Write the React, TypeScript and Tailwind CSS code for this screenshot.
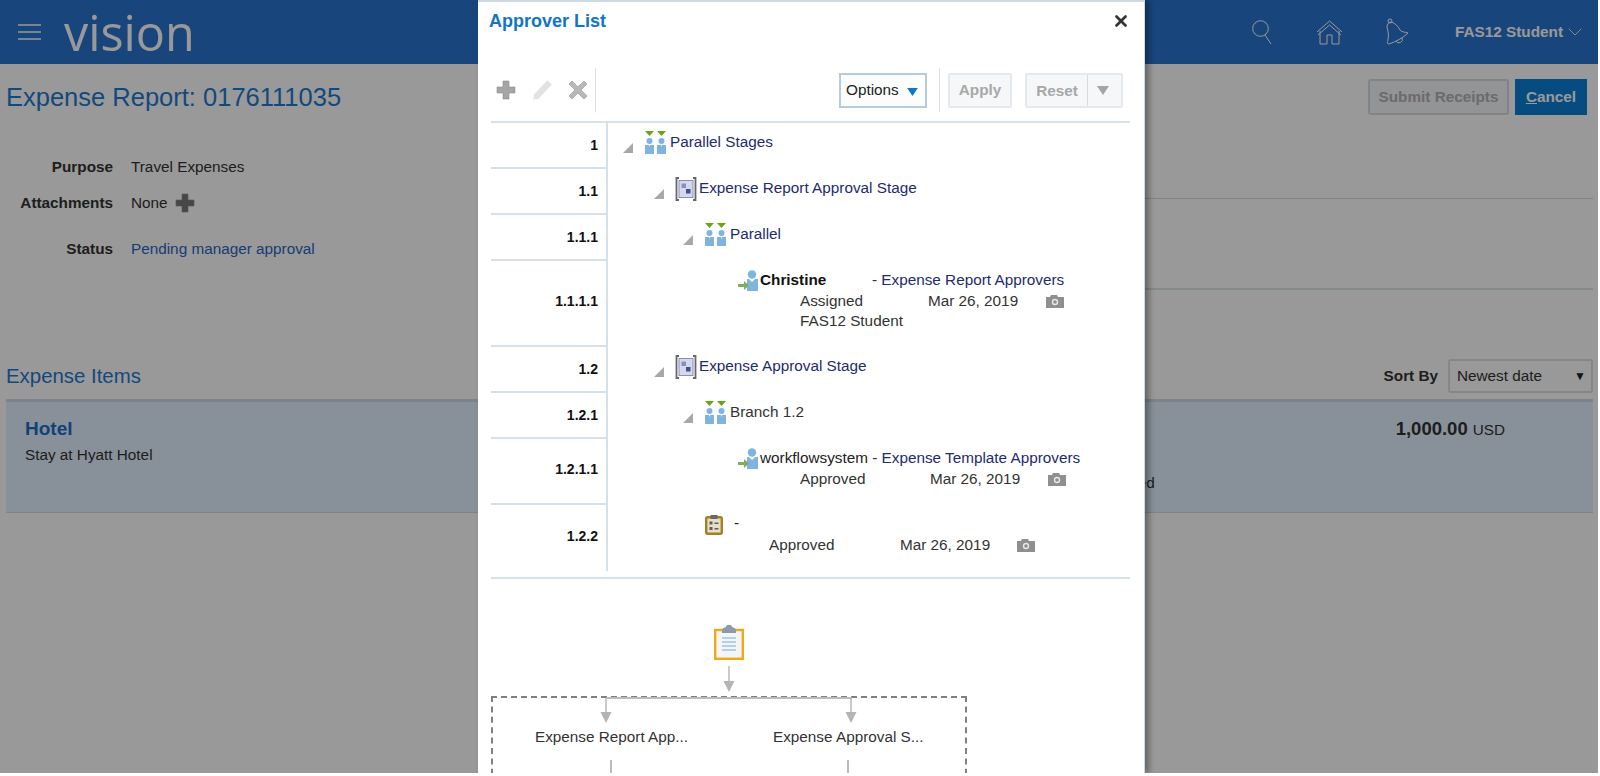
import React from "react";
import { ChevronDown, X } from "lucide-react";

const font = "font-['Liberation_Sans',Arial,sans-serif]";

const ParallelIcon = () => (
  <svg width="24" height="24" viewBox="0 0 24 24" className="shrink-0">
    <path d="M1 0h9l-4.500 5zM13 0h9l-4.500 5z" fill="#6aa516" />
    <circle cx="5.500" cy="10" r="3" fill="#7fb3e0" />
    <circle cx="17.500" cy="10" r="3" fill="#7fb3e0" />
    <path d="M1 14h4l.5 2 .5-2h4v9H1zM13 14h4l.5 2 .5-2h4v9h-9z" fill="#7fb3e0" />
  </svg>
);

const StageIcon = () => (
  <svg width="22" height="24" viewBox="0 0 22 24" className="shrink-0">
    <path d="M4 1H1.500v22H4M18 1h2.500v22H18" fill="none" stroke="#666" strokeWidth="1.800" />
    <rect x="4" y="3.500" width="14" height="17" fill="#d5d8ec" stroke="#8a8fb8" />
    <rect x="6.500" y="6.500" width="4.500" height="4.500" fill="#8a8fb8" />
    <rect x="11" y="12" width="4.500" height="4.500" fill="#4a4e88" />
  </svg>
);

const UserIcon = () => (
  <svg width="22" height="22" viewBox="0 0 22 22" className="shrink-0">
    <circle cx="15" cy="4.500" r="4.200" fill="#7fb3e0" />
    <path d="M10 9h2l3 3 3-3h3v12H10z" fill="#7fb3e0" />
    <path d="M1 14h6v-3l5 4.500L7 20v-3H1z" fill="#7fae62" />
  </svg>
);

const CameraIcon = () => (
  <svg width="18" height="13" viewBox="0 0 18 13" className="shrink-0">
    <path d="M0 2h4l1-2h6l1 2h6v11H0z" fill="#8f8f8f" />
    <circle cx="9" cy="7" r="3.200" fill="#e8e8e8" />
    <circle cx="9" cy="7" r="1.800" fill="#8f8f8f" />
  </svg>
);

const Caret = () => (
  <svg width="12" height="12" viewBox="0 0 12 12" className="shrink-0">
    <path d="M11 1v10H1z" fill="#a8a8a8" />
  </svg>
);

const PlusIcon = ({ size = 20, fill = "#a5a5a5" }: { size?: number; fill?: string }) => (
  <svg width={size} height={size} viewBox="0 0 20 20">
    <path d="M7 1h6v6h6v6h-6v6H7v-6H1V7h6z" fill={fill} stroke="#8d8d8d" strokeWidth="0.600" />
  </svg>
);

const DownArrow = ({ h = 24 }: { h?: number }) => (
  <svg width="12" height={h} viewBox={`0 0 12 ${h}`} className="block">
    <path d={`M6 0v${h - 9}`} stroke="#b8b8b8" strokeWidth="1.500" />
    <path d={`M0.500 ${h - 11}h11L6 ${h}z`} fill="#b4b4b4" />
  </svg>
);

const ChecklistIcon = () => (
  <svg width="18" height="20" viewBox="0 0 18 20" className="shrink-0">
    <rect x="1.200" y="2.200" width="15.600" height="16.600" rx="1.500" fill="#e4dfca" stroke="#a67f1f" strokeWidth="2.400" />
    <rect x="5.500" y="0" width="7" height="4" fill="#6b6b63" />
    <path d="M4.500 6.500h3v3h-3zM4.500 12h3v3h-3z" fill="#5f5f58" />
    <path d="M9.500 7.500h4v1.500h-4zM9.500 13h4v1.500h-4z" fill="#5f5f58" />
  </svg>
);

const rows = [
  { num: "1", h: "h-[46px]" },
  { num: "1.1", h: "h-[46px]" },
  { num: "1.1.1", h: "h-[46px]" },
  { num: "1.1.1.1", h: "h-[86px] pb-[3px]" },
  { num: "1.2", h: "h-[46px]" },
  { num: "1.2.1", h: "h-[46px]" },
  { num: "1.2.1.1", h: "h-[66px] pb-[3px]" },
  { num: "1.2.2", h: "h-[66px] pb-[3px]" },
];

const Approver = ({ children, status, date, extra, statusW }: { children: React.ReactNode; status: string; date: string; extra?: string; statusW: string }) => (
  <div className="pl-[129px] pt-[9px]">
    <div className="flex items-start gap-[1px] h-[20px]">
      <UserIcon />
      <div className="leading-[20px] whitespace-nowrap">{children}</div>
    </div>
    <div className="pl-[63px] pt-[1px] leading-[20px] text-[#333]">
      <div className="flex items-center">
        <span className={statusW}>{status}</span>
        <span className="w-[118px]">{date}</span>
        <CameraIcon />
      </div>
      {extra && <div>{extra}</div>}
    </div>
  </div>
);

const TreeRow = ({ pad, icon, label, color = "text-[#1d2b6f]" }: { pad: string; icon: React.ReactNode; label: string; color?: string }) => (
  <div className={`flex items-start pt-[8px] ${pad}`}>
    <div className="pt-[11px] w-[22px]">
      <Caret />
    </div>
    {icon}
    <span className={`ml-[2px] mt-[1px] leading-[20px] whitespace-nowrap ${color}`}>{label}</span>
  </div>
);

export default function App() {
  return (
    <div className={`w-[1600px] h-[776px] bg-white overflow-hidden text-[15.300px] ${font}`}>
      <div className="relative w-[1598px] h-[773px] bg-white overflow-hidden">
        {/* page behind the dialog */}
        <header className="h-[64px] bg-[#2b73d0] flex items-center pl-[18px] pr-[11px] text-white">
          <svg width="23" height="16" viewBox="0 0 23 16" fill="none" stroke="white" strokeWidth="1.500">
            <path d="M0 1h23M0 8h23M0 15h23" />
          </svg>
          <span className="ml-[23px] font-['Open_Sans',sans-serif] font-normal text-[48.500px] leading-[56px] -mt-[1px]">vision</span>
          <div className="ml-auto flex items-center">
            <svg width="20" height="24" viewBox="0 0 20 24" fill="none" stroke="white" strokeWidth="1">
              <circle cx="8.500" cy="8.500" r="7.800" />
              <path d="M13 15l6 9" />
            </svg>
            <svg width="27" height="25" viewBox="0 0 27 25" className="ml-[44px]" fill="none" stroke="white" strokeWidth="1">
              <path d="M1 12 13.500 1 26 12M4 11v13h7v-9h5v9h7V11M2 15 13.500 5 25 15" />
            </svg>
            <svg width="24" height="28" viewBox="0 0 24 28" className="ml-[43px]" fill="none" stroke="white" strokeWidth="1">
              <circle cx="4" cy="3" r="2" />
              <path d="M5 4C9 5 12 8 14 12c1 2 5 2 8 3-5 5-13 9-19 11-3 0-1-3-1-5 1-4 0-8-1-12 0-3 2-5 4-5z" />
              <path d="M10 23a3 3 0 0 0 6-3" />
            </svg>
            <span className="ml-[45px] font-bold">FAS12 Student</span>
            <ChevronDown size={24} strokeWidth={0.800} />
          </div>
        </header>

        <div className="pl-[6px] pr-[5px]">
          <div className="flex items-start h-[82px] pt-[15px]">
            <h1 className="text-[25.500px] leading-[36px] text-[#1f7ad0] whitespace-nowrap">Expense Report: 0176111035</h1>
            <div className="ml-auto flex gap-[6px] pr-[6px]">
              <button className="w-[141px] h-[36px] border-2 border-[#d8dde0] rounded-[3px] bg-[#f5f7f8] font-bold text-[#b2b2b2]">Submit Receipts</button>
              <button className="w-[72px] h-[36px] bg-[#0a7fd6] font-bold text-white">
                <span className="underline">C</span>ancel
              </button>
            </div>
          </div>

          <div className="flex justify-between h-[213px]">
            <div className="grid grid-cols-[107px_1fr] gap-x-[18px] content-start text-[#333] leading-[20px]">
              <div className="text-right font-bold pt-[11px]">Purpose</div>
              <div className="pt-[11px]">Travel Expenses</div>
              <div className="text-right font-bold pt-[16px]">Attachments</div>
              <div className="pt-[16px] flex items-center gap-[7px]">
                None
                <PlusIcon size={20} fill="#777" />
              </div>
              <div className="text-right font-bold pt-[26px]">Status</div>
              <div className="pt-[26px] text-[#2a66c0]">Pending manager approval</div>
            </div>
            <div className="w-[600px] h-[92px] mt-[52px] border-t border-b-2 border-t-[#d4dcdc] border-b-[#dde4ea]" />
          </div>

          <div className="flex items-center h-[34px]">
            <h2 className="text-[20.400px] text-[#1f7ad0]">Expense Items</h2>
            <span className="ml-auto font-bold text-[#333]">Sort By</span>
            <div className="ml-[10px] w-[145px] h-[34px] border-2 border-[#dde0e3] rounded-[3px] flex items-center justify-between pl-[7px] pr-[5px] text-[#333]">
              Newest date
              <span className="text-[12px] text-[#222]">▼</span>
            </div>
          </div>

          <div className="mt-[6px] h-[114px] border-t-[3px] border-b border-[#d0dbe5] bg-[#e3f2ff] flex pl-[19px]">
            <div>
              <div className="font-bold text-[19px] text-[#1f6dc8] leading-[24px] mt-[15px]">Hotel</div>
              <div className="text-[#333] leading-[20px] mt-[4px]">Stay at Hyatt Hotel</div>
            </div>
            <div className="ml-auto mt-[71px] leading-[20px] text-[#333]">Approved</div>
            <div className="ml-[241px] pr-[88px] pt-[15px] leading-[24px] text-[#333]">
              <span className="font-bold text-[18.500px]">1,000.00</span>
              <span className="ml-[5px]">USD</span>
            </div>
          </div>
        </div>

        <div className="absolute inset-0 bg-black/40" />

        {/* dialog */}
        <div className="absolute left-[478px] top-0 bottom-0 w-[667px] bg-white border-t-2 border-r border-[#cdd9e4] shadow-[4px_0_6px_rgba(0,0,0,0.35)] text-[#222] overflow-hidden">
          <div className="flex items-center justify-between pl-[11px] pr-[14px] h-[38px]">
            <span className="font-bold text-[18px] text-[#0f75c9]">Approver List</span>
            <X size={18} strokeWidth={3.500} className="text-[#333]" />
          </div>

          <div className="flex items-center h-[44px] mt-[28px] ml-[18px] mr-[21px]">
            <PlusIcon size={20} />
            <svg width="24" height="24" viewBox="0 0 22 22" className="ml-[15px]">
              <path d="M15 2l4 4L7 19l-5 1 1-5z" fill="#e2e2e2" />
            </svg>
            <svg width="20" height="20" viewBox="0 0 20 20" className="ml-[13px]">
              <path d="M4 1l6 6 6-6 3 3-6 6 6 6-3 3-6-6-6 6-3-3 6-6-6-6z" fill="#b8b8b8" stroke="#8f8f8f" strokeWidth="0.600" />
            </svg>
            <div className="ml-[7px] w-px h-[44px] bg-[#d6e0e8]" />
            <button className="ml-auto w-[88px] h-[35px] border-2 border-[#b9cad8] bg-[#fbfcfc] flex items-center justify-between pl-[5px] pr-[7px] text-[#222]">
              Options
              <svg width="11" height="8" viewBox="0 0 12 9" className="mt-[3px]"><path d="M0 0h12L6 9z" fill="#0f75c9" /></svg>
            </button>
            <div className="ml-[12px] w-px h-[44px] bg-[#d6e0e8]" />
            <button className="ml-[8px] w-[64px] h-[35px] border-2 border-[#e4e9ed] rounded-[2px] bg-[#f5f7f8] font-bold text-[#a8a8a8]">Apply</button>
            <div className="ml-[13px] w-[98px] h-[35px] border-2 border-[#e4e9ed] rounded-[2px] bg-[#f5f7f8] flex items-center font-bold text-[#a8a8a8]">
              <span className="w-[61px] text-center border-r border-[#d8dde0] leading-[31px]">Reset</span>
              <svg width="12" height="9" viewBox="0 0 12 9" className="ml-[9px]"><path d="M0 0h12L6 9z" fill="#a5a5a5" /></svg>
            </div>
          </div>

          <div className="ml-[13px] mr-[14px] mt-[9px] border-t-2 border-b-2 border-[#d6e0e8] pb-[6px]">
            <div className="flex">
              <div className="w-[117px] shrink-0 border-r-2 border-[#d6e0e8]">
                {rows.map((r) => (
                  <div key={r.num} className={`${r.h} flex items-center justify-end pr-[8px] font-bold text-[14px] text-[#111] border-b-2 border-[#d6e0e8] last:border-b-0`}>
                    {r.num}
                  </div>
                ))}
              </div>
              <div className="flex-1 min-w-0">
                <div className="h-[46px]"><TreeRow pad="pl-[14px]" icon={<ParallelIcon />} label="Parallel Stages" /></div>
                <div className="h-[46px]"><TreeRow pad="pl-[45px]" icon={<StageIcon />} label="Expense Report Approval Stage" /></div>
                <div className="h-[46px]"><TreeRow pad="pl-[74px]" icon={<ParallelIcon />} label="Parallel" /></div>
                <div className="h-[86px]">
                  <Approver status="Assigned" statusW="w-[128px]" date="Mar 26, 2019" extra="FAS12 Student">
                    <span className="font-bold text-[#111] inline-block w-[112px]">Christine</span>
                    <span className="text-[#1d2b6f]">- Expense Report Approvers</span>
                  </Approver>
                </div>
                <div className="h-[46px]"><TreeRow pad="pl-[45px]" icon={<StageIcon />} label="Expense Approval Stage" /></div>
                <div className="h-[46px]"><TreeRow pad="pl-[74px]" icon={<ParallelIcon />} color="text-[#333]" label="Branch 1.2" /></div>
                <div className="h-[66px]">
                  <Approver status="Approved" statusW="w-[130px]" date="Mar 26, 2019">
                    <span className="text-[#222]">workflowsystem </span>
                    <span className="text-[#1d2b6f]">- Expense Template Approvers</span>
                  </Approver>
                </div>
                <div className="h-[66px] pl-[97px] pt-[10px]">
                  <div className="flex items-start gap-[11px]">
                    <ChecklistIcon />
                    <span className="leading-[16px]">-</span>
                  </div>
                  <div className="pl-[64px] flex items-center text-[#333] leading-[20px]">
                    <span className="w-[131px]">Approved</span>
                    <span className="w-[117px]">Mar 26, 2019</span>
                    <CameraIcon />
                  </div>
                </div>
              </div>
            </div>
          </div>

          {/* flow diagram */}
          <div className="ml-[13px] mt-[44px] w-[476px] text-[#333]">
            <div className="flex flex-col items-center">
              <svg width="30" height="37" viewBox="0 0 30 37" className="-ml-[1px]">
                <rect x="1.200" y="7" width="27.600" height="28.800" fill="#f3f5f7" stroke="#f0a818" strokeWidth="2.400" />
                <path d="M8 7c0-2 2-2 4-3 0-3 6-3 6 0 2 1 4 1 4 3v3H8z" fill="#8c99a8" />
                <path d="M8 15h14M8 19h14M8 23h14M8 27h14" stroke="#9cc4e8" strokeWidth="1.400" />
              </svg>
              <div className="mt-[6px] -ml-[1px]"><DownArrow h={26} /></div>
            </div>
            <div className="mt-[4px] w-full border-2 border-dashed border-[#808080] h-[110px]">
              <div className="ml-[113px] w-[246px] h-[2px] bg-[#bbb] -mt-[1px]" />
              <div className="grid grid-cols-[245px_1fr]">
                <div>
                  <div className="ml-[107px] -mt-px"><DownArrow h={25} /></div>
                  <div className="ml-[42px] mt-[4px] whitespace-nowrap leading-[20px]">Expense Report App...</div>
                  <div className="ml-[117px] mt-[13px] w-[2px] h-[20px] bg-[#bbb]" />
                </div>
                <div>
                  <div className="ml-[107px] -mt-px"><DownArrow h={25} /></div>
                  <div className="ml-[35px] mt-[4px] whitespace-nowrap leading-[20px]">Expense Approval S...</div>
                  <div className="ml-[109px] mt-[13px] w-[2px] h-[20px] bg-[#bbb]" />
                </div>
              </div>
            </div>
          </div>
        </div>
      </div>
    </div>
  );
}
